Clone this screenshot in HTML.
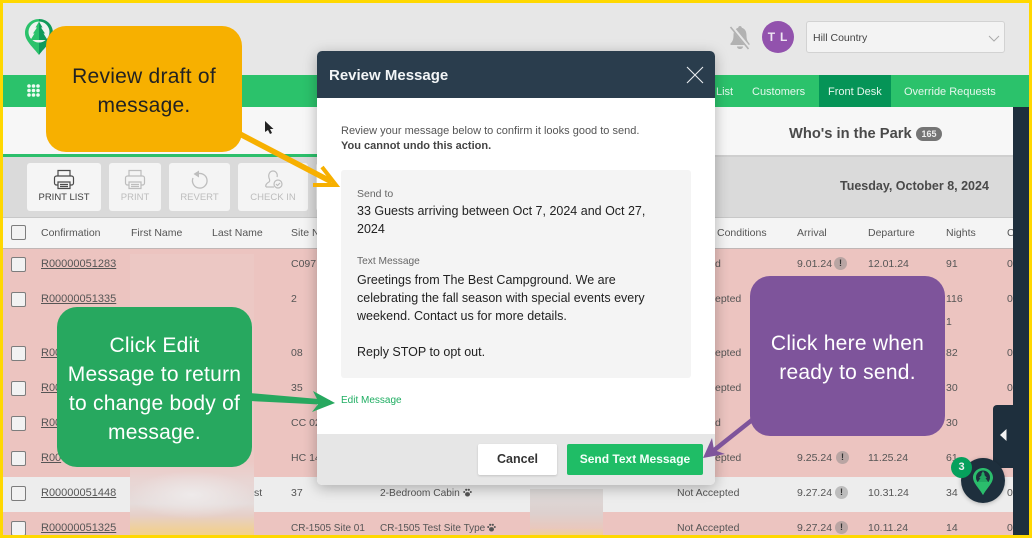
<!DOCTYPE html>
<html lang="en">
<head>
<meta charset="utf-8">
<title>Review Message</title>
<style>
html,body{margin:0;padding:0;background:#fff}
#p{position:relative;width:1032px;height:538px;overflow:hidden;background:#ecc4c0;font-family:"Liberation Sans",sans-serif;color:#4a4a4a}
#p div{position:absolute;white-space:nowrap}
.t{font-size:10.5px;line-height:14px;color:#555}
.u{text-decoration:underline}
.cb{left:11px;width:13px;height:13px;background:#f2f2f2;border:1px solid #7d7d7d;border-radius:2px}
.btn{top:163px;height:48px;background:#f4f4f4;border-radius:3px}
.bl{top:191px;font-size:9.5px;line-height:13px;color:#bdbdbd;text-align:center}
.ex{width:13px;height:13px;border-radius:50%;background:#b9a5a3;color:#333;font-size:9px;font-weight:bold;line-height:13px;text-align:center}
.call{color:#fff;text-align:center;font-size:21px;line-height:29px;letter-spacing:.25px}
.mt{left:357px;font-size:12.5px;line-height:18px;color:#222}
</style>
</head>
<body>
<div id="p">
  <!-- top bar -->
  <div style="left:0;top:0;width:1032px;height:75px;background:#e7e7e7"></div>
  <svg style="position:absolute;left:25px;top:19px" width="28" height="37" viewBox="0 0 28 37"><path d="M14 0C6 0 0 6 0 14c0 8 8 14 14 22z" fill="#2bc26b"/><path d="M14 0c8 0 14 6 14 14 0 8-8 14-14 22z" fill="#0f9a5a"/><circle cx="14" cy="13" r="10.500" fill="#eef3ef"/><path d="M14 2.500l-3.500 6h1.500l-4 6h1.500l-4 6.500h8.500v14z" fill="#2bc26b"/><path d="M14 2.500l3.500 6H16l4 6h-1.500l4 6.500H14v14z" fill="#0f9a5a"/></svg>
  <svg style="position:absolute;left:729px;top:25px" width="22" height="25" viewBox="0 0 22 25"><path d="M11 1c-1 0-1.800.8-1.800 1.800C5.500 4 4.500 7 4.500 10.500c0 4-1 6-3 8v1.500h19v-1.500c-2-2-3-4-3-8 0-3.500-1-6.500-4.700-7.700C12.800 1.800 12 1 11 1z" fill="#b2b2b2"/><path d="M8 21.500h6c0 1.500-1.300 2.500-3 2.500s-3-1-3-2.500z" fill="#b2b2b2"/><path d="M2 1l18 22" stroke="#e7e7e7" stroke-width="3.500"/><path d="M1.500 2l18 22" stroke="#b2b2b2" stroke-width="1.600"/></svg>
  <div style="left:762px;top:21px;width:32px;height:32px;border-radius:50%;background:#9252ad;color:#efe6f3;font-size:12px;font-weight:bold;line-height:32px;text-align:center;letter-spacing:.8px">T L</div>
  <div style="left:806px;top:21px;width:197px;height:30px;background:#f3f3f3;border:1px solid #d2d2d2;border-radius:3px"></div>
  <div class="t" style="left:813px;top:31px;font-size:10.500px;color:#444">Hill Country</div>
  <svg style="position:absolute;left:988px;top:35px" width="12" height="8" viewBox="0 0 12 8"><path d="M1 1l5 5 5-5" fill="none" stroke="#aaa" stroke-width="1"/></svg>

  <!-- nav -->
  <div style="left:0;top:75px;width:1032px;height:32px;background:#2bc26b"></div>
  <svg style="position:absolute;left:27px;top:84px" width="13" height="13" fill="#f0fbf4"><circle cx="2" cy="2" r="1.800"/><circle cx="6.500" cy="2" r="1.800"/><circle cx="11" cy="2" r="1.800"/><circle cx="2" cy="6.500" r="1.800"/><circle cx="6.500" cy="6.500" r="1.800"/><circle cx="11" cy="6.500" r="1.800"/><circle cx="2" cy="11" r="1.800"/><circle cx="6.500" cy="11" r="1.800"/><circle cx="11" cy="11" r="1.800"/></svg>
  <div style="left:819px;top:75px;width:72px;height:32px;background:#059457"></div>
  <div class="t" style="left:716px;top:85px;font-size:11px;color:#e6f7ed">List</div>
  <div class="t" style="left:752px;top:85px;font-size:11px;color:#e6f7ed">Customers</div>
  <div class="t" style="left:828px;top:85px;font-size:11px;color:#e6f7ed">Front Desk</div>
  <div class="t" style="left:904px;top:85px;font-size:11px;color:#e6f7ed">Override Requests</div>

  <!-- sub header -->
  <div style="left:0;top:107px;width:1032px;height:49px;background:#f7f7f7"></div>
  <div style="left:0;top:154px;width:320px;height:3px;background:#2cbf6b"></div>
  <div style="left:715px;top:155px;width:300px;height:2px;background:#cfcfcf"></div>
  <div style="left:789px;top:125px;font-size:14.700px;line-height:18px;font-weight:bold;color:#4a4a4a">Who's in the Park</div>
  <div style="left:916px;top:127px;width:26px;height:14px;border-radius:7px;background:#757575;color:#eee;font-size:9px;font-weight:bold;line-height:14px;text-align:center">165</div>

  <!-- toolbar -->
  <div style="left:0;top:157px;width:1032px;height:60px;background:#dadada"></div>
  <div class="btn" style="left:27px;width:74px;background:#f5f5f5"></div>
  <div class="btn" style="left:109px;width:52px"></div>
  <div class="btn" style="left:169px;width:61px"></div>
  <div class="btn" style="left:238px;width:70px"></div>
  <div class="btn" style="left:316px;width:20px"></div>
  <svg style="position:absolute;left:53px;top:169px" width="22" height="21" viewBox="0 0 22 21" fill="none" stroke="#4a4a4a" stroke-width="1.200"><path d="M5 7V1.500h12V7"/><rect x="1.500" y="7" width="19" height="9" rx="2"/><path d="M5 13v6.500h12V13z" fill="#f5f5f5"/><path d="M7 15.500h8M7 17.500h8"/></svg>
  <svg style="position:absolute;left:124px;top:169px" width="22" height="21" viewBox="0 0 22 21" fill="none" stroke="#bdbdbd" stroke-width="1.200"><path d="M5 7V1.500h12V7"/><rect x="1.500" y="7" width="19" height="9" rx="2"/><path d="M5 13v6.500h12V13z" fill="#f4f4f4"/><path d="M7 15.500h8M7 17.500h8"/></svg>
  <svg style="position:absolute;left:190px;top:169px" width="20" height="21" viewBox="0 0 20 21" fill="none" stroke="#bdbdbd" stroke-width="1.300"><path d="M7 5a7.300 7.300 0 1 1-4 4"/><path d="M9 1.500v7L3.500 5z" fill="#bdbdbd" stroke="none"/></svg>
  <svg style="position:absolute;left:263px;top:169px" width="20" height="21" viewBox="0 0 20 21" fill="none" stroke="#bdbdbd" stroke-width="1.200"><path d="M3 18c-1-2 1-4 3-5 1-1 1-2 0-4-1-4 1-7 4-7s5 3 4 6"/><path d="M3 18h8"/><circle cx="15" cy="15" r="4"/><path d="M13 15l1.500 1.500 2.500-2.500"/></svg>
  <div class="bl" style="left:27px;width:74px;color:#3e3e3e">PRINT LIST</div>
  <div class="bl" style="left:109px;width:52px">PRINT</div>
  <div class="bl" style="left:169px;width:61px">REVERT</div>
  <div class="bl" style="left:238px;width:70px">CHECK IN</div>
  <div style="left:840px;top:178px;font-size:12.500px;line-height:16px;font-weight:bold;color:#4a4a4a">Tuesday, October 8, 2024</div>

  <!-- table head -->
  <div style="left:0;top:217px;width:1032px;height:32px;background:#f4f4f4;border-top:1px solid #c8c8c8;border-bottom:1px solid #c0b6b5;box-sizing:border-box"></div>
  <div class="cb" style="top:225px"></div>
  <div class="t" style="left:41px;top:226px">Confirmation</div>
  <div class="t" style="left:131px;top:226px">First Name</div>
  <div class="t" style="left:212px;top:226px">Last Name</div>
  <div class="t" style="left:291px;top:226px">Site N</div>
  <div class="t" style="left:717px;top:226px">Conditions</div>
  <div class="t" style="left:797px;top:226px">Arrival</div>
  <div class="t" style="left:868px;top:226px">Departure</div>
  <div class="t" style="left:946px;top:226px">Nights</div>
  <div class="t" style="left:1007px;top:226px">C</div>

  <!-- rows -->
  <div style="left:0;top:477px;width:1032px;height:35px;background:#ededed"></div>
  <div class="cb" style="top:257px"></div><div class="cb" style="top:292px"></div><div class="cb" style="top:346px"></div><div class="cb" style="top:381px"></div><div class="cb" style="top:416px"></div><div class="cb" style="top:451px"></div><div class="cb" style="top:486px"></div><div class="cb" style="top:521px"></div>
  <div class="t u" style="left:41px;top:257px;font-size:11px">R00000051283</div>
  <div class="t u" style="left:41px;top:292px;font-size:11px">R00000051335</div>
  <div class="t u" style="left:41px;top:346px;font-size:11px">R00</div>
  <div class="t u" style="left:41px;top:381px;font-size:11px">R00</div>
  <div class="t u" style="left:41px;top:416px;font-size:11px">R00</div>
  <div class="t u" style="left:41px;top:451px;font-size:11px">R00</div>
  <div class="t u" style="left:41px;top:486px;font-size:11px">R00000051448</div>
  <div class="t u" style="left:41px;top:521px;font-size:11px">R00000051325</div>
  <div class="t" style="left:291px;top:257px">C097</div>
  <div class="t" style="left:291px;top:292px">2</div>
  <div class="t" style="left:291px;top:346px">08</div>
  <div class="t" style="left:291px;top:381px">35</div>
  <div class="t" style="left:291px;top:416px">CC 02</div>
  <div class="t" style="left:291px;top:451px">HC 14</div>
  <div class="t" style="left:291px;top:486px">37</div>
  <div class="t" style="left:291px;top:522px;font-size:10px">CR-1505 Site 01</div>
  <div class="t" style="left:380px;top:487px;font-size:10.200px">2-Bedroom Cabin</div>
  <svg style="position:absolute;left:463px;top:488px" width="9" height="9" viewBox="0 0 9 9" fill="#555"><ellipse cx="4.500" cy="6.300" rx="2.500" ry="2.200"/><circle cx="1.200" cy="4" r="1"/><circle cx="3.200" cy="1.800" r="1.100"/><circle cx="5.800" cy="1.800" r="1.100"/><circle cx="7.800" cy="4" r="1"/></svg>
  <div class="t" style="left:380px;top:522px;font-size:10px">CR-1505 Test Site Type</div>
  <svg style="position:absolute;left:487px;top:523px" width="9" height="9" viewBox="0 0 9 9" fill="#555"><ellipse cx="4.500" cy="6.300" rx="2.500" ry="2.200"/><circle cx="1.200" cy="4" r="1"/><circle cx="3.200" cy="1.800" r="1.100"/><circle cx="5.800" cy="1.800" r="1.100"/><circle cx="7.800" cy="4" r="1"/></svg>
  <div class="t" style="left:254px;top:486px">st</div>
  <div class="t" style="left:715px;top:257px">d</div>
  <div class="t" style="left:715px;top:292px">epted</div>
  <div class="t" style="left:715px;top:346px">epted</div>
  <div class="t" style="left:715px;top:381px">epted</div>
  <div class="t" style="left:715px;top:416px">d</div>
  <div class="t" style="left:715px;top:451px">epted</div>
  <div class="t" style="left:677px;top:486px">Not Accepted</div>
  <div class="t" style="left:677px;top:521px">Not Accepted</div>
  <div class="t" style="left:797px;top:257px">9.01.24</div><div class="ex" style="left:834px;top:257px">!</div>
  <div class="t" style="left:797px;top:451px">9.25.24</div><div class="ex" style="left:836px;top:451px">!</div>
  <div class="t" style="left:797px;top:486px">9.27.24</div><div class="ex" style="left:835px;top:486px;background:#bdbdbd">!</div>
  <div class="t" style="left:797px;top:521px">9.27.24</div><div class="ex" style="left:835px;top:521px">!</div>
  <div class="t" style="left:868px;top:257px">12.01.24</div>
  <div class="t" style="left:868px;top:451px">11.25.24</div>
  <div class="t" style="left:868px;top:486px">10.31.24</div>
  <div class="t" style="left:868px;top:521px">10.11.24</div>
  <div class="t" style="left:946px;top:257px">91</div>
  <div class="t" style="left:946px;top:292px">116</div>
  <div class="t" style="left:946px;top:315px">1</div>
  <div class="t" style="left:946px;top:346px">82</div>
  <div class="t" style="left:946px;top:381px">30</div>
  <div class="t" style="left:946px;top:416px">30</div>
  <div class="t" style="left:946px;top:451px">61</div>
  <div class="t" style="left:946px;top:486px">34</div>
  <div class="t" style="left:946px;top:521px">14</div>
  <div class="t" style="left:1007px;top:257px">0</div>
  <div class="t" style="left:1007px;top:292px">0</div>
  <div class="t" style="left:1007px;top:346px">0</div>
  <div class="t" style="left:1007px;top:381px">0</div>
  <div class="t" style="left:1007px;top:486px">0</div>
  <div class="t" style="left:1007px;top:521px">0</div>

  <!-- blurred redaction -->
  <div style="left:130px;top:254px;width:124px;height:284px;background:radial-gradient(ellipse 62px 24px at 62px 241px,#eeeaea 0,rgba(238,234,234,0) 100%),linear-gradient(180deg,#ecc8c4 0,#ecc9c5 73%,#e8d5d3 80%,#e5dcdb 88%,#e6cfc8 92%,#f0d098 97%,#f5d283 100%)"></div>
  <div style="left:530px;top:489px;width:73px;height:49px;background:linear-gradient(180deg,#dedbda 0,#ddd0ce 50%,#e9c8bd 80%,#f5d283 100%)"></div>

  <!-- right panel -->
  <div style="left:1013px;top:107px;width:19px;height:431px;background:#1e2f3d"></div>
  <div style="left:993px;top:405px;width:20px;height:63px;background:#1e2f3d;border-radius:4px 0 0 4px"></div>
  <svg style="position:absolute;left:1000px;top:429px" width="7" height="12"><path d="M6.500 0v12L0 6z" fill="#f2f2f2"/></svg>
  <div style="left:961px;top:458px;width:44px;height:45px;border-radius:50%;background:#1e2f3d;box-shadow:0 1px 4px rgba(0,0,0,.25)"></div>
  <svg style="position:absolute;left:973px;top:468px" width="20" height="27" viewBox="0 0 20 27"><path d="M10 0C4.500 0 0 4.300 0 9.500 0 15 6 20 10 27c4-7 10-12 10-17.500C20 4.300 15.500 0 10 0z" fill="#2bbd6c"/><circle cx="10" cy="9.500" r="7" fill="#1e2f3d"/><path d="M10 3l-2 3.500h1L6 10h1.500L4.500 14.500c2 0 3.500 1 5.500 1s3.500-1 5.500-1L12.500 10H14l-3-3.500h1z" fill="#22a861"/><path d="M3 14l7 13 7-13z" fill="#2bbd6c"/></svg>
  <div style="left:951px;top:457px;width:21px;height:21px;border-radius:50%;background:#06a05c;color:#f2f2f2;font-size:11px;font-weight:bold;line-height:21px;text-align:center">3</div>

  <!-- modal -->
  <div style="left:317px;top:51px;width:398px;height:434px;background:#fff;border-radius:5px;box-shadow:0 3px 14px rgba(0,0,0,.28);overflow:hidden">
    <div style="left:0;top:0;width:398px;height:47px;background:#2a3d4d"></div>
    <div style="left:0;top:383px;width:398px;height:51px;background:#e6e6e6"></div>
    <div style="left:24px;top:119px;width:350px;height:208px;background:#f4f4f4;border-radius:3px"></div>
  </div>
  <div style="left:329px;top:67px;font-size:15px;line-height:18px;font-weight:bold;color:#f2f5f7">Review Message</div>
  <svg style="position:absolute;left:686px;top:66px" width="18" height="18"><path d="M1 1l16 16M17 1L1 17" stroke="#e8ecef" stroke-width="1.100"/></svg>
  <div style="left:341px;top:124px;font-size:11px;line-height:15px;color:#555">Review your message below to confirm it looks good to send.</div>
  <div style="left:341px;top:139px;font-size:11px;line-height:15px;font-weight:bold;color:#444">You cannot undo this action.</div>
  <div class="t" style="left:357px;top:187px;font-size:10.500px;color:#666">Send to</div>
  <div class="mt" style="top:202px">33 Guests arriving between Oct 7, 2024 and Oct 27,</div>
  <div class="mt" style="top:220px">2024</div>
  <div class="t" style="left:357px;top:255px;font-size:10.200px;color:#666">Text Message</div>
  <div class="mt" style="top:271px">Greetings from The Best Campground. We are</div>
  <div class="mt" style="top:289px">celebrating the fall season with special events every</div>
  <div class="mt" style="top:307px">weekend. Contact us for more details.</div>
  <div class="mt" style="top:343px">Reply STOP to opt out.</div>
  <div style="left:341px;top:394px;font-size:10px;line-height:14px;color:#1fae62">Edit Message</div>
  <div style="left:478px;top:444px;width:79px;height:31px;background:#fff;border-radius:2px;box-shadow:0 1px 2px rgba(0,0,0,.15);font-size:12.500px;font-weight:bold;line-height:31px;text-align:center;color:#333">Cancel</div>
  <div style="left:567px;top:444px;width:136px;height:31px;background:#1fbd66;border-radius:2px;font-size:12px;font-weight:bold;line-height:31px;text-align:center;color:#f4fff9">Send Text Message</div>

  <!-- arrows -->
  <svg style="position:absolute;left:0;top:0" width="1032" height="538" fill="none">
    <path d="M238 133L332 182" stroke="#f7b000" stroke-width="5.500"/>
    <path d="M322 167L336 185L313 185" stroke="#f7b000" stroke-width="4"/>
    <path d="M250 393L330 400L330 405L250 401z" fill="#27a85f"/>
    <path d="M313 391L335 403L312 412L319 403z" fill="#27a85f"/>
    <path d="M752 420L708 455" stroke="#7e549b" stroke-width="4.500"/>
    <path d="M712 438L703 458L725 454L714 450z" fill="#7e549b"/>
  </svg>

  <!-- callouts -->
  <div style="left:46px;top:26px;width:196px;height:126px;background:#f7b000;border-radius:20px"></div>
  <div class="call" style="left:46px;top:62px;width:196px;color:#222">Review draft of</div>
  <div class="call" style="left:46px;top:91px;width:196px;color:#222">message.</div>
  <div style="left:57px;top:307px;width:195px;height:160px;background:#27a85f;border-radius:20px"></div>
  <div class="call" style="left:57px;top:331px;width:195px">Click Edit</div>
  <div class="call" style="left:57px;top:360px;width:195px">Message to return</div>
  <div class="call" style="left:57px;top:389px;width:195px">to change body of</div>
  <div class="call" style="left:57px;top:418px;width:195px">message.</div>
  <div style="left:750px;top:276px;width:195px;height:160px;background:#7e549b;border-radius:20px"></div>
  <div class="call" style="left:750px;top:329px;width:195px">Click here when</div>
  <div class="call" style="left:750px;top:358px;width:195px">ready to send.</div>

  <!-- cursor -->
  <svg style="position:absolute;left:264px;top:121px" width="10" height="14"><path d="M1 0v11l3-2 2 4 2-1-2-4h3.500z" fill="#222"/></svg>

  <!-- yellow frame -->
  <div style="left:0;top:0;width:1032px;height:538px;box-sizing:border-box;border:3px solid #ffd800"></div>
</div>
</body>
</html>
